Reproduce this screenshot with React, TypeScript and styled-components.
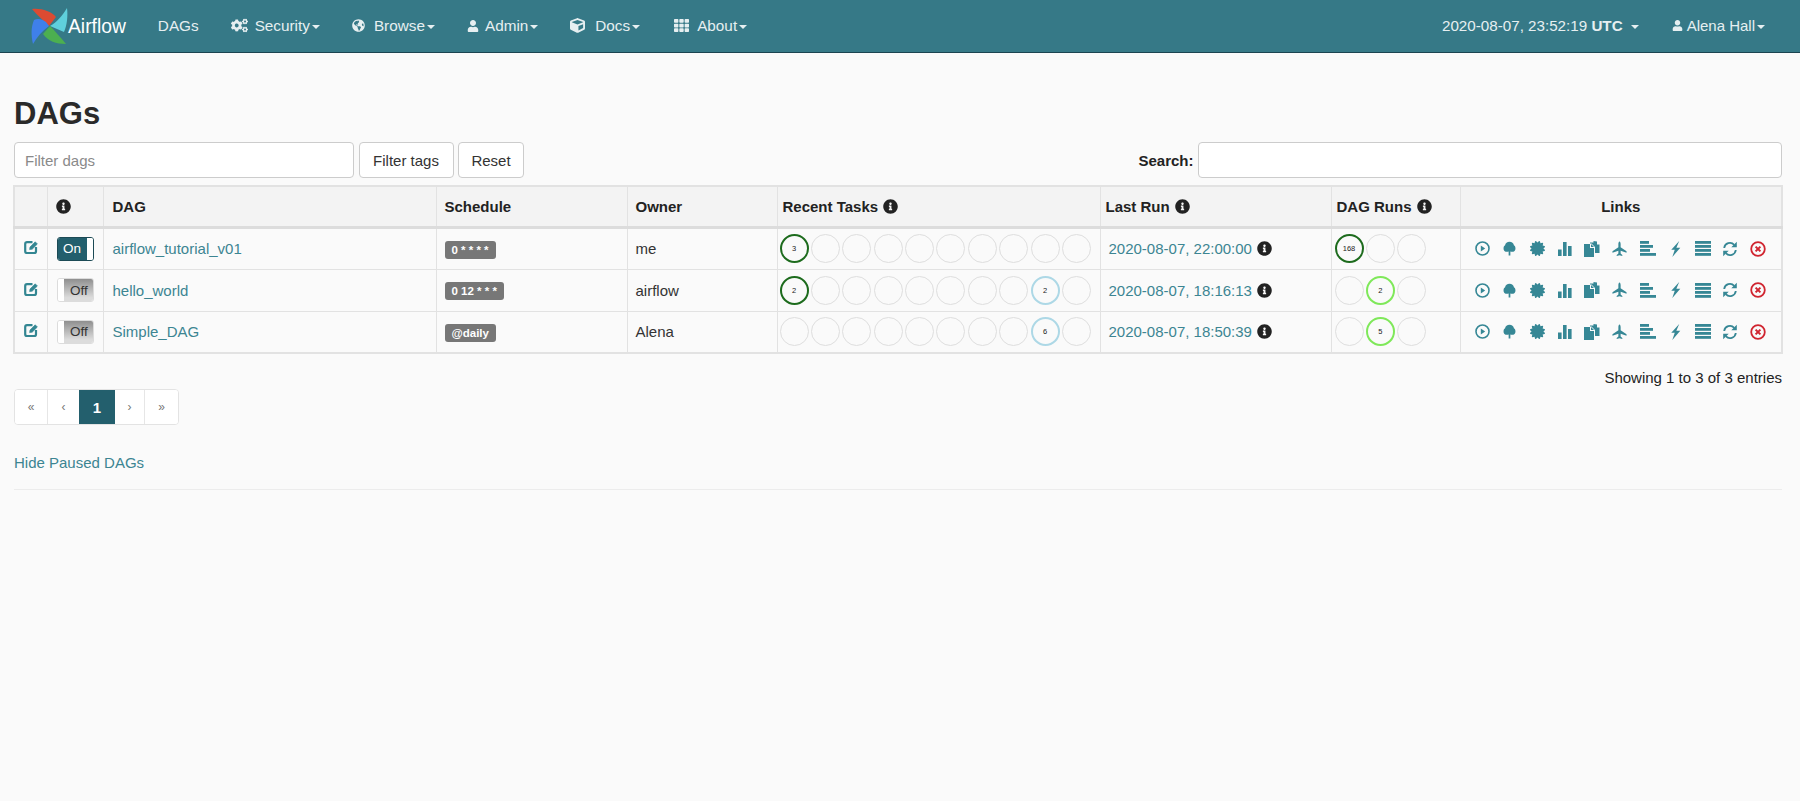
import React from "react"
import styled, {createGlobalStyle} from "styled-components"
import {FaCogs, FaGlobeAmericas, FaUser, FaCube, FaTh, FaInfoCircle, FaCertificate} from "react-icons/fa"

const GlobalStyle = createGlobalStyle`
  html, body {
    margin: 0;
    padding: 0;
    background: #fafafa;
    color: #222;
    font-family: "Liberation Sans", Arial, sans-serif;
    font-size: 15px;
  }
`

const NavBar = styled.nav`
  height: 52px;
  background: #367987;
  border-bottom: 1px solid #1b4450;
  display: flex;
  align-items: center;
  justify-content: space-between;
  padding: 0 35px 0 31px;
  color: #e6eff1;
  font-size: 15.3px;
`

const NavGroup = styled.div`
  display: flex;
  align-items: center;
  gap: ${p => p.$gap}px;
`

const Brand = styled.div`
  display: flex;
  align-items: center;
  font-size: 19.3px;
  color: #fff;
  height: 52px;
`

const BrandName = styled.span`
  margin-top: 1px;
`

const NavItem = styled.div`
  display: flex;
  align-items: center;
  white-space: nowrap;
  margin-top: -1px;
  margin-left: ${p => p.$shift || 0}px;
  font-size: ${p => p.$size ? `${p.$size}px` : "inherit"};
  svg {
    font-size: ${p => p.$iconSize || 14}px;
    margin-right: ${p => p.$iconGap || 9}px;
  }
`

const Caret = styled.span`
  display: inline-block;
  margin-left: ${p => p.$gap || 2}px;
  margin-top: 2px;
  border-top: 4px solid currentColor;
  border-left: 4px solid transparent;
  border-right: 4px solid transparent;
`

const Page = styled.main`
  padding: 0 18px 0 14px;
`

const Title = styled.h1`
  margin: 0;
  padding-top: 41px;
  font-size: 31px;
  line-height: 40px;
  font-weight: 700;
  color: #2a2a2a;
`

const Toolbar = styled.div`
  display: flex;
  align-items: center;
  justify-content: space-between;
  margin: 8px 0 7px;
`

const ToolGroup = styled.div`
  display: flex;
  align-items: center;
  gap: 4.5px;
`

const TextInput = styled.input`
  box-sizing: border-box;
  width: ${p => p.$width}px;
  height: 36px;
  padding: 0 10px;
  border: 1px solid #ccc;
  border-radius: 4px;
  background: #fff;
  font: inherit;
  color: #333;
  &::placeholder { color: #8a8a8a; opacity: 1; }
`

const Button = styled.button`
  box-sizing: border-box;
  height: 36px;
  width: ${p => p.$width}px;
  border: 1px solid #ccc;
  border-radius: 4px;
  background: #fff;
  color: #333;
  font: inherit;
  padding: 0;
`

const SearchLabel = styled.label`
  font-weight: 700;
  font-size: 15px;
`

const Table = styled.table`
  width: 1768px;
  margin-left: -1px;
  table-layout: fixed;
  border-collapse: collapse;
  border: 2px solid #e2e2e2;
`

const Th = styled.th`
  height: 38.5px;
  padding: 0 ${p => p.$pad ?? 8}px;
  background: #f3f3f3;
  border: 1px solid #e2e2e2;
  border-bottom: 3px solid #dcdcdc;
  text-align: ${p => p.$center ? "center" : "left"};
  font-weight: 700;
  color: #222;
  white-space: nowrap;
`

const Td = styled.td`
  height: 40.5px;
  padding: 0 ${p => p.$pad ?? 8}px;
  border: 1px solid #e2e2e2;
  vertical-align: middle;
  color: #333;
  white-space: nowrap;
`

const TextLink = styled.a`
  color: #3c8592;
  text-decoration: none;
`

const InfoIcon = styled(FaInfoCircle)`
  color: #222;
  font-size: 15px;
  vertical-align: -2px;
  margin-left: ${p => p.$gap ?? 5}px;
`

const EditGlyph = styled.svg`
  display: block;
  margin: 0 0 2px 9px;
  color: #338692;
`

const Toggle = styled.div`
  box-sizing: border-box;
  display: flex;
  flex-direction: ${p => p.$on ? "row" : "row-reverse"};
  width: 37px;
  height: 24px;
  margin-left: 9px;
  border-radius: 3px;
  overflow: hidden;
  border: 1px solid ${p => p.$on ? "#1c4a55" : "#dcdcdc"};
  background: #fff;
`

const ToggleFace = styled.div`
  flex: 1;
  display: flex;
  align-items: center;
  justify-content: center;
  font-size: 13.5px;
  color: ${p => p.$on ? "#fff" : "#333"};
  background: ${p => p.$on ? "#235f6d" : "linear-gradient(#8f8f8f, #dcdcdc 85%)"};
  padding-left: ${p => p.$on ? 0 : 2}px;
`

const ToggleHandle = styled.div`
  width: 6px;
  background: #fff;
`

const Badge = styled.span`
  display: inline-block;
  height: 18px;
  line-height: 18px;
  padding: 0 7px;
  margin-top: 2px;
  border-radius: 3px;
  background: #777;
  color: #fff;
  font-size: 11.5px;
  font-weight: 700;
`

const Circles = styled.div`
  display: flex;
  gap: 2.4px;
  margin-left: -2px;
`

const Circle = styled.div`
  box-sizing: border-box;
  width: 29px;
  height: 29px;
  border-radius: 50%;
  border: ${p => p.$color ? `2px solid ${p.$color}` : "1px solid #dedede"};
  display: flex;
  align-items: center;
  justify-content: center;
  font-size: 7.5px;
  color: #222;
`

const LinkIcons = styled.div`
  display: flex;
  align-items: center;
  gap: 12.6px;
  padding-left: 2px;
`

const LinkIcon = styled.span`
  width: 15px;
  height: 15px;
  display: flex;
  align-items: center;
  justify-content: center;
  color: ${p => p.$danger ? "#d0242f" : "#368795"};
  svg { display: block; flex: none; }
`

const Showing = styled.div`
  margin-top: 15px;
  text-align: right;
  line-height: 17px;
`

const Pagination = styled.div`
  display: inline-flex;
  margin-top: 3px;
  height: 36px;
  border: 1px solid #e3e3e3;
  border-radius: 4px;
  background: #fff;
  box-sizing: border-box;
  overflow: hidden;
`

const PageCell = styled.div`
  box-sizing: border-box;
  width: ${p => p.$width}px;
  display: flex;
  align-items: center;
  justify-content: center;
  font-size: ${p => p.$active ? 15 : 12}px;
  font-weight: ${p => p.$active ? 700 : 400};
  color: ${p => p.$active ? "#fff" : "#777"};
  background: ${p => p.$active ? "#235f6d" : "#fff"};
  border-left: ${p => p.$divider ? "1px solid #e6e6e6" : "none"};
`

const HideLink = styled(TextLink)`
  display: block;
  margin-top: 29px;
  line-height: 18px;
`

const Divider = styled.hr`
  margin: 17px 0 0;
  border: 0;
  border-top: 1px solid #ececec;
`

function Logo() {
    return (
        <svg width="37" height="38" viewBox="0 0 37 38">
            <path d="M1 2 C10 1 20 4 25 10 L18 19 C13 14 7 9 1 2Z" fill="#dc4b32"/>
            <path d="M36 1 C37 9 36 18 33 25 L19 19 C26 15 31 9 36 1Z" fill="#5fd0dc"/>
            <path d="M35 37 C25 37 17 34 12 27 L19 19 C24 24 30 31 35 37Z" fill="#4caf50"/>
            <path d="M2 37 C0 28 0 20 3 13 C7 11 11 12 15 15 L18 19 C11 24 6 30 2 37Z" fill="#3f80ea"/>
        </svg>
    )
}

function EditIcon() {
    return (
        <EditGlyph width="15" height="15" viewBox="0 0 15 15" fill="none" stroke="currentColor">
            <path d="M8.5 2.2 H3 C1.9 2.2 1.2 2.9 1.2 4 V11.2 C1.2 12.3 1.9 13 3 13 H10.2 C11.3 13 12 12.3 12 11.2 V7" strokeWidth="2.2"/>
            <path d="M5.6 9.6 L6 7 L11.2 1.8 L13.4 4 L8.2 9.2Z" fill="currentColor" strokeWidth="0.6"/>
        </EditGlyph>
    )
}

function PlayIcon() {
    return (
        <svg width="15" height="15" viewBox="0 0 15 15">
            <circle cx="7.5" cy="7.5" r="6.5" fill="none" stroke="currentColor" strokeWidth="1.6"/>
            <path d="M5.8 4.6 L10.2 7.5 L5.8 10.4Z" fill="currentColor"/>
        </svg>
    )
}

function TreeIcon() {
    return (
        <svg width="13" height="15" viewBox="0 0 15 16" fill="currentColor">
            <path d="M6.5 16 V11.6 C3 12.6 0.4 10.6 0.6 7.6 C0.8 5.8 1.4 5 2.4 4.3 C2.8 1.8 4.8 0.3 7.5 0.3 C10.2 0.3 12.2 1.8 12.6 4.3 C13.6 5 14.3 5.9 14.4 7.6 C14.6 10.6 12 12.6 8.5 11.6 V16Z"/>
        </svg>
    )
}

function StatsIcon() {
    return (
        <svg width="14" height="15" viewBox="0 0 14 15" fill="currentColor">
            <rect x="0" y="8.5" width="3.6" height="6.5"/>
            <rect x="5" y="1" width="3.6" height="14"/>
            <rect x="10" y="5" width="3.6" height="10"/>
        </svg>
    )
}

function DuplicateIcon() {
    return (
        <svg width="16" height="16" viewBox="0 0 16 16" fill="currentColor">
            <path d="M0 3 H6 V7 H10 V16 H0Z"/>
            <path d="M7 3 L10 6 H7Z"/>
            <path d="M6 1.5 H9.5 V0 L13 0.5 V3.5 H15.5 V12 H11 V6 L7.5 2.5 H6Z"/>
        </svg>
    )
}

function PlaneIcon() {
    return (
        <svg width="15" height="16" viewBox="0 0 16 16" fill="currentColor">
            <path d="M8 0 C8.8 0 9.2 1.5 9.2 3 V6 L15.5 10.5 V12 L9.2 9.8 V12.8 L11 14.5 V15.5 L8 14.6 L5 15.5 V14.5 L6.8 12.8 V9.8 L0.5 12 V10.5 L6.8 6 V3 C6.8 1.5 7.2 0 8 0Z"/>
        </svg>
    )
}

function AlignIcon({justify}: {justify?: boolean}) {
    const widths = justify ? [16, 16, 16, 16] : [9, 13, 10, 16]
    return (
        <svg width="16" height="15" viewBox="0 0 16 15" fill="currentColor">
            {widths.map((width, index) => <rect key={index} x="0" y={index * 4} width={width} height="2.8"/>)}
        </svg>
    )
}

function BoltIcon() {
    return (
        <svg width="17" height="18" viewBox="0 0 16 16" fill="currentColor">
            <path d="M11.5 0.5 L4 8.8 H7.3 L5 15.5 L12.5 6.8 H8.8Z"/>
        </svg>
    )
}

function RefreshIcon() {
    return (
        <svg width="16" height="16" viewBox="0 0 16 16">
            <path d="M2.2 7 A5.8 5.8 0 0 1 12.2 3.8 M13.8 9 A5.8 5.8 0 0 1 3.8 12.2" fill="none" stroke="currentColor" strokeWidth="1.8"/>
            <path d="M14.8 0.8 V6.3 H9.3Z M1.2 15.2 V9.7 H6.7Z" fill="currentColor"/>
        </svg>
    )
}

function RemoveIcon() {
    return (
        <svg width="16" height="16" viewBox="0 0 16 16" fill="none" stroke="currentColor">
            <circle cx="8" cy="8" r="6.8" strokeWidth="1.8"/>
            <path d="M5.6 5.6 L10.4 10.4 M10.4 5.6 L5.6 10.4" strokeWidth="2"/>
        </svg>
    )
}

const dags = [
    {
        name: "airflow_tutorial_v01", on: true, schedule: "0 * * * *", owner: "me", lastRun: "2020-08-07, 22:00:00",
        tasks: {0: ["3", "#1d6b1d"]}, runs: {0: ["168", "#1d6b1d"]},
    },
    {
        name: "hello_world", on: false, schedule: "0 12 * * *", owner: "airflow", lastRun: "2020-08-07, 18:16:13",
        tasks: {0: ["2", "#1d6b1d"], 8: ["2", "#add8e6"]}, runs: {1: ["2", "#7fe85a"]},
    },
    {
        name: "Simple_DAG", on: false, schedule: "@daily", owner: "Alena", lastRun: "2020-08-07, 18:50:39",
        tasks: {8: ["6", "#add8e6"]}, runs: {1: ["5", "#7fe85a"]},
    },
]

function CircleRow({count, values}: {count: number, values: Record<number, string[]>}) {
    return (
        <Circles>
            {Array.from({length: count}).map((_, index) => (
                <Circle key={index} $color={values[index]?.[1]}>{values[index]?.[0]}</Circle>
            ))}
        </Circles>
    )
}

export default function App() {
    return (
        <>
            <GlobalStyle/>
            <NavBar>
                <NavGroup $gap={32}>
                    <Brand><Logo/><BrandName>Airflow</BrandName></Brand>
                    <NavItem>DAGs</NavItem>
                    <NavItem $iconSize={17} $iconGap={7}><FaCogs/>Security<Caret/></NavItem>
                    <NavItem $iconSize={13}><FaGlobeAmericas/>Browse<Caret/></NavItem>
                    <NavItem $iconSize={12} $iconGap={6}><FaUser/>Admin<Caret/></NavItem>
                    <NavItem $iconSize={15} $iconGap={10}><FaCube/>Docs<Caret/></NavItem>
                    <NavItem $iconSize={15} $iconGap={8} $shift={2}><FaTh/>About<Caret/></NavItem>
                </NavGroup>
                <NavGroup $gap={33}>
                    <NavItem $size={15.2}>2020-08-07, 23:52:19&nbsp;<b>UTC</b><Caret $gap={8}/></NavItem>
                    <NavItem $size={15} $iconSize={11} $iconGap={4}><FaUser/>Alena Hall<Caret/></NavItem>
                </NavGroup>
            </NavBar>
            <Page>
                <Title>DAGs</Title>
                <Toolbar>
                    <ToolGroup>
                        <TextInput $width={340} placeholder="Filter dags"/>
                        <Button $width={95}>Filter tags</Button>
                        <Button $width={66}>Reset</Button>
                    </ToolGroup>
                    <ToolGroup>
                        <SearchLabel>Search:</SearchLabel>
                        <TextInput $width={584}/>
                    </ToolGroup>
                </Toolbar>
                <Table>
                    <colgroup>
                        {[33, 56, 333, 191, 150, 323, 231, 129, 322].map((width, index) => <col key={index} width={width}/>)}
                    </colgroup>
                    <thead>
                        <tr>
                            <Th/>
                            <Th><InfoIcon $gap={0}/></Th>
                            <Th $pad={9}>DAG</Th>
                            <Th>Schedule</Th>
                            <Th>Owner</Th>
                            <Th $pad={5}>Recent Tasks<InfoIcon/></Th>
                            <Th $pad={5}>Last Run<InfoIcon/></Th>
                            <Th $pad={5}>DAG Runs<InfoIcon/></Th>
                            <Th $center>Links</Th>
                        </tr>
                    </thead>
                    <tbody>
                        {dags.map(dag => (
                            <tr key={dag.name}>
                                <Td $pad={0}><EditIcon/></Td>
                                <Td $pad={0}>
                                    <Toggle $on={dag.on}>
                                        <ToggleFace $on={dag.on}>{dag.on ? "On" : "Off"}</ToggleFace>
                                        <ToggleHandle/>
                                    </Toggle>
                                </Td>
                                <Td $pad={9}><TextLink>{dag.name}</TextLink></Td>
                                <Td><Badge>{dag.schedule}</Badge></Td>
                                <Td>{dag.owner}</Td>
                                <Td $pad={4}><CircleRow count={10} values={dag.tasks}/></Td>
                                <Td><TextLink>{dag.lastRun}</TextLink><InfoIcon/></Td>
                                <Td $pad={5}><CircleRow count={3} values={dag.runs}/></Td>
                                <Td $pad={12}>
                                    <LinkIcons>
                                        <LinkIcon><PlayIcon/></LinkIcon>
                                        <LinkIcon><TreeIcon/></LinkIcon>
                                        <LinkIcon><FaCertificate size={15}/></LinkIcon>
                                        <LinkIcon><StatsIcon/></LinkIcon>
                                        <LinkIcon><DuplicateIcon/></LinkIcon>
                                        <LinkIcon><PlaneIcon/></LinkIcon>
                                        <LinkIcon><AlignIcon/></LinkIcon>
                                        <LinkIcon><BoltIcon/></LinkIcon>
                                        <LinkIcon><AlignIcon justify/></LinkIcon>
                                        <LinkIcon><RefreshIcon/></LinkIcon>
                                        <LinkIcon $danger><RemoveIcon/></LinkIcon>
                                    </LinkIcons>
                                </Td>
                            </tr>
                        ))}
                    </tbody>
                </Table>
                <Showing>Showing 1 to 3 of 3 entries</Showing>
                <Pagination>
                    <PageCell $width={32}>«</PageCell>
                    <PageCell $width={32} $divider>‹</PageCell>
                    <PageCell $width={36} $active>1</PageCell>
                    <PageCell $width={29}>›</PageCell>
                    <PageCell $width={34} $divider>»</PageCell>
                </Pagination>
                <HideLink>Hide Paused DAGs</HideLink>
                <Divider/>
            </Page>
        </>
    )
}
